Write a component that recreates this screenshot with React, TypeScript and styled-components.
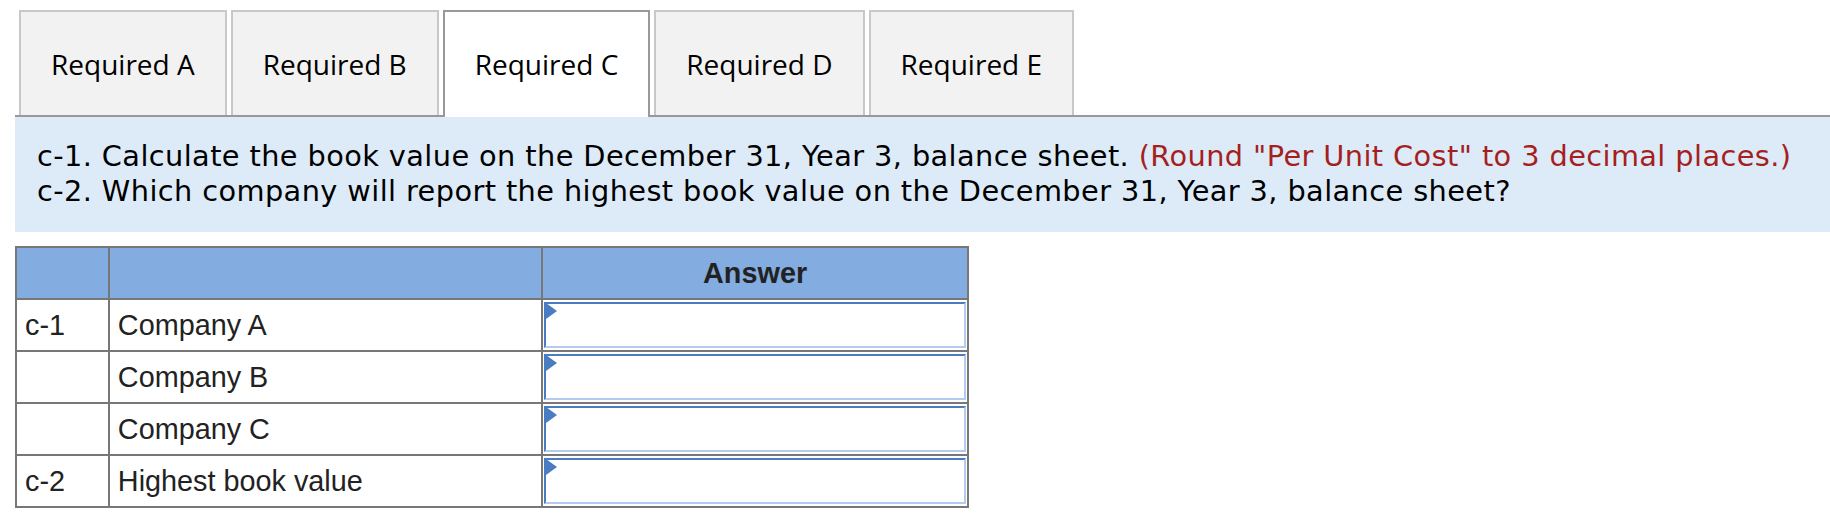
import React from 'react';
import styled, { createGlobalStyle } from 'styled-components';

const GlobalStyle = createGlobalStyle`
  body {
    margin: 0;
    background: #fff;
  }
`;

const Page = styled.div`
  padding: 10px 0 0 15px;
`;

const TabBar = styled.div`
  display: flex;
  align-items: flex-end;
  gap: 4px;
  padding-left: 4px;
  border-bottom: 2px solid #999;
`;

const Tab = styled.div<{ $active?: boolean }>`
  box-sizing: border-box;
  height: ${(p) => (p.$active ? '107px' : '105px')};
  margin-bottom: ${(p) => (p.$active ? '-2px' : '0')};
  padding: 0 30px;
  padding-bottom: ${(p) => (p.$active ? '2px' : '0')};
  display: flex;
  align-items: center;
  justify-content: center;
  background: ${(p) => (p.$active ? '#fff' : '#f2f2f2')};
  border: 2px solid ${(p) => (p.$active ? '#999' : '#c8c8c8')};
  border-bottom: 0;
  font-family: 'Segoe UI', 'Open Sans', sans-serif;
  font-size: 28px;
  color: #000;
`;

const Prompt = styled.div`
  background: #ddebf8;
  padding: 22px 22px 23px;
  font-family: 'DejaVu Sans', Verdana, sans-serif;
  font-size: 28.8px;
  letter-spacing: 0.4px;
  line-height: 35px;
  color: #000;
`;

const Note = styled.span`
  color: #a51f1f;
`;

const Grid = styled.table`
  margin-top: 14px;
  width: 954px;
  border-collapse: collapse;
  border: 2px solid #777;
  font-family: Arial, 'Liberation Sans', sans-serif;
  font-size: 28.8px;
  color: #222;
`;

const HeadCell = styled.th`
  height: 50px;
  padding: 0;
  background: #83ace0;
  border: 2px solid #777;
  font-weight: bold;
  text-align: center;
`;

const Cell = styled.td`
  height: 48px;
  padding: 0 8px;
  border: 2px solid #777;
  vertical-align: middle;
  white-space: nowrap;
`;

const InputCell = styled.td`
  height: 48px;
  padding: 1px;
  border: 2px solid #777;
`;

const AnswerBox = styled.div`
  position: relative;
  box-sizing: border-box;
  height: 46px;
  background: #fff;
  border: 2px solid #4a7cc1;
  border-right-color: #b3cbee;
  border-bottom-color: #b3cbee;
`;

const Flag = styled.span`
  position: absolute;
  top: -1px;
  left: 0;
  width: 0;
  height: 0;
  border-top: 8px solid transparent;
  border-bottom: 8px solid transparent;
  border-left: 11px solid #4a7cc1;
`;

const tabs = ['Required A', 'Required B', 'Required C', 'Required D', 'Required E'];

const rows = [
  { part: 'c-1', label: 'Company A' },
  { part: '', label: 'Company B' },
  { part: '', label: 'Company C' },
  { part: 'c-2', label: 'Highest book value' },
];

export default function App() {
  return (
    <Page>
      <GlobalStyle />
      <TabBar>
        {tabs.map((t) => (
          <Tab key={t} $active={t === 'Required C'}>
            {t}
          </Tab>
        ))}
      </TabBar>
      <Prompt>
        c-1. Calculate the book value on the December 31, Year 3, balance sheet.{' '}
        <Note>(Round "Per Unit Cost" to 3 decimal places.)</Note>
        <br />
        c-2. Which company will report the highest book value on the December 31, Year 3, balance sheet?
      </Prompt>
      <Grid>
        <colgroup>
          <col style={{ width: 93 }} />
          <col style={{ width: 434 }} />
          <col style={{ width: 427 }} />
        </colgroup>
        <thead>
          <tr>
            <HeadCell />
            <HeadCell />
            <HeadCell>Answer</HeadCell>
          </tr>
        </thead>
        <tbody>
          {rows.map((r) => (
            <tr key={r.label}>
              <Cell>{r.part}</Cell>
              <Cell>{r.label}</Cell>
              <InputCell>
                <AnswerBox>
                  <Flag />
                </AnswerBox>
              </InputCell>
            </tr>
          ))}
        </tbody>
      </Grid>
    </Page>
  );
}
